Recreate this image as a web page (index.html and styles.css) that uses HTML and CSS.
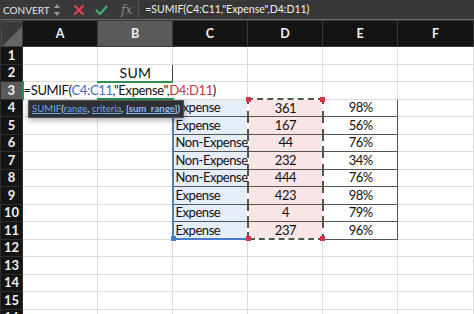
FILE: index.html
```
<!DOCTYPE html>
<html>

<head>
	<title>SUMIF</title>
	<link rel="stylesheet" href="styles.css">
</head>

<body>
	<div class="toolbar">
		<div class="namebox">CONVERT</div>
		<svg class="spin" width="8" height="14" viewBox="0 0 8 14">
			<path d="M4 1 L7 5 L1 5 Z" fill="#9a9a9a" />
			<path d="M4 13 L7 9 L1 9 Z" fill="#9a9a9a" />
		</svg>
		<svg class="tool-icon cancel" width="12" height="12" viewBox="0 0 12 12">
			<path d="M2 2 L10 10 M10 2 L2 10" stroke="#e0434d" stroke-width="2.2" stroke-linecap="round" />
		</svg>
		<svg class="tool-icon" width="13" height="12" viewBox="0 0 13 12">
			<path d="M1.5 6.5 L5 10 L11.5 2.5" fill="none" stroke="#3fae6a" stroke-width="2.2" stroke-linecap="round" stroke-linejoin="round" />
		</svg>
		<span class="fx">fx</span>
		<div class="formula">=SUMIF(C4:C11,"Expense",D4:D11)</div>
	</div>

	<div class="sheet">
		<table class="grid">
			<colgroup>
				<col class="col-head">
				<col class="col">
				<col class="col">
				<col class="col">
				<col class="col">
				<col class="col">
				<col class="col-last">
			</colgroup>
			<tr class="head">
				<th class="corner"></th>
				<th>A</th>
				<th class="active">B</th>
				<th>C</th>
				<th>D</th>
				<th>E</th>
				<th>F</th>
			</tr>
			<tr>
				<th>1</th><td></td><td></td><td></td><td></td><td></td><td></td>
			</tr>
			<tr>
				<th>2</th><td></td><td class="sum">SUM</td><td></td><td></td><td></td><td></td>
			</tr>
			<tr>
				<th class="active">3</th>
				<td class="edit-left"><div class="edit-text">=SUMIF(<span class="ref-c">C4:C11</span>,"Expense",<span class="ref-d">D4:D11</span>)</div></td>
				<td class="edit"></td><td></td><td></td><td></td><td></td>
			</tr>
			<tr>
				<th>4</th><td></td><td></td>
				<td class="rc first">Expense</td>
				<td class="rd first"><span class="handle tl"></span>361<span class="handle tr"></span></td>
				<td class="re">98%</td><td></td>
			</tr>
			<tr>
				<th>5</th><td></td><td></td>
				<td class="rc">Expense</td><td class="rd">167</td><td class="re">56%</td><td></td>
			</tr>
			<tr>
				<th>6</th><td></td><td></td>
				<td class="rc">Non-Expense</td><td class="rd">44</td><td class="re">76%</td><td></td>
			</tr>
			<tr>
				<th>7</th><td></td><td></td>
				<td class="rc">Non-Expense</td><td class="rd">232</td><td class="re">34%</td><td></td>
			</tr>
			<tr>
				<th>8</th><td></td><td></td>
				<td class="rc">Non-Expense</td><td class="rd">444</td><td class="re">76%</td><td></td>
			</tr>
			<tr>
				<th>9</th><td></td><td></td>
				<td class="rc">Expense</td><td class="rd">423</td><td class="re">98%</td><td></td>
			</tr>
			<tr>
				<th>10</th><td></td><td></td>
				<td class="rc">Expense</td><td class="rd">4</td><td class="re">79%</td><td></td>
			</tr>
			<tr>
				<th>11</th><td></td><td></td>
				<td class="rc last"><span class="handle bl blue"></span>Expense</td>
				<td class="rd last"><span class="handle bl"></span>237<span class="handle br"></span></td>
				<td class="re">96%</td><td></td>
			</tr>
			<tr>
				<th>12</th><td></td><td></td><td></td><td></td><td></td><td></td>
			</tr>
			<tr>
				<th>13</th><td></td><td></td><td></td><td></td><td></td><td></td>
			</tr>
			<tr>
				<th>14</th><td></td><td></td><td></td><td></td><td></td><td></td>
			</tr>
			<tr>
				<th>15</th><td></td><td></td><td></td><td></td><td></td><td></td>
			</tr>
			<tr>
				<th>16</th><td></td><td></td><td></td><td></td><td></td><td></td>
			</tr>
		</table>

		<div class="tooltip">
			<span class="link">SUMIF</span>(<span class="link">range</span>, <span class="link">criteria</span>, <span class="link strong">[sum_range]</span>)
		</div>
	</div>
</body>

</html>
```

FILE: styles.css
```
body {
	margin: 0;
	background: #fff;
	font-family: Lato, "Open Sans", sans-serif;
	overflow: hidden;
	height: 314px;
}

/* formula bar */
.toolbar {
	display: flex;
	align-items: center;
	height: 19px;
	background: #3a3a3a;
	border-bottom: 1px solid #6a6a6a;
}

.namebox {
	width: 48px;
	padding-left: 3px;
	color: #e4e4e4;
	font-size: 10px;
}

.spin {
	margin-left: 2px;
}

.tool-icon {
	margin-left: 10px;
}

.tool-icon.cancel {
	margin-left: 12px;
}

.fx {
	margin-left: 13px;
	color: #8a8a8a;
	font-family: "DejaVu Serif", serif;
	font-style: italic;
	font-size: 12px;
}

.formula {
	flex: 1;
	height: 17px;
	margin-left: 6px;
	padding-left: 6px;
	background: #363636;
	border-left: 1px solid #555;
	color: #f2f2f2;
	font-size: 10.5px;
	line-height: 17px;
}

/* sheet */
.sheet {
	position: relative;
}

.grid {
	table-layout: fixed;
	border-collapse: collapse;
	width: 474px;
}

.col-head {
	width: 22px;
}

.col {
	width: 75px;
}

.grid tr {
	height: 17.5px;
}

.grid tr.head {
	height: 26px;
}

.grid th {
	padding: 0;
	background: #141414;
	color: #f0f0f0;
	font-size: 13px;
	font-weight: bold;
	line-height: 15px;
	text-align: center;
	border: 1px solid #2e2e2e;
}

.grid tr.head th {
	font-size: 12.5px;
	border-color: #3a3a3a;
}

.grid th.active {
	background: #5a5a5a;
}

.grid th.corner {
	background: linear-gradient(135deg, #3a3a3a 55%, #666 55%);
}

.grid td {
	padding: 0 1px 0 2px;
	font-size: 13px;
	letter-spacing: -0.45px;
	line-height: 15px;
	color: #111;
	white-space: nowrap;
	border: 1px solid #dcdcdc;
	position: relative;
}

.sum {
	text-align: center;
	font-size: 14px !important;
	letter-spacing: 0.3px !important;
	border: 1px solid #444 !important;
	border-bottom: 2px solid #2f8f4e !important;
}

.edit-left {
	overflow: visible;
	border-left: 2px solid #2f8f4e !important;
}

.edit {
	border-bottom: 2px solid #2f8f4e !important;
}

.edit-text {
	font-size: 13px;
	letter-spacing: -0.35px;
	margin-left: -2px;
	position: relative;
	z-index: 2;
}

.ref-c {
	color: #3a6fc4;
}

.ref-d {
	color: #c7353f;
}

/* highlighted ranges */
.rc {
	background: #e5edf8;
	border: 1px solid #555 !important;
	border-left: 2px solid #4a7bc6 !important;
}

.rc.last {
	border-bottom: 2px solid #4a7bc6 !important;
}

.rd {
	text-align: center;
	background: #f9e5e5;
	border: 1px solid #555 !important;
	border-left: 2px dashed #4c5a4c !important;
	border-right: 2px dashed #4c5a4c !important;
}

.rd.first {
	border-top: 2px dashed #4c5a4c !important;
}

.rd.last {
	border-bottom: 2px dashed #4c5a4c !important;
}

.re {
	text-align: center;
	border: 1px solid #555 !important;
}

.handle {
	position: absolute;
	width: 5px;
	height: 5px;
	background: #d2364a;
	z-index: 3;
}

.handle.blue {
	background: #4a7bc6;
}

.handle.tl {
	top: -3px;
	left: -3px;
}

.handle.tr {
	top: -3px;
	right: -3px;
}

.handle.bl {
	bottom: -3px;
	left: -3px;
}

.handle.br {
	bottom: -3px;
	right: -3px;
}

/* function hint */
.tooltip {
	position: absolute;
	left: 28px;
	top: 80px;
	height: 16px;
	padding: 0 3px;
	background: #2c2f36;
	border: 1px solid #555;
	color: #e8e8e8;
	font-size: 9.6px;
	line-height: 16px;
	box-shadow: 0 2px 6px rgba(0, 0, 0, 0.35);
	z-index: 4;
}

.link {
	color: #6ea6e8;
	text-decoration: underline;
}

.link.strong {
	font-weight: bold;
	color: #8cbcf5;
}
```
